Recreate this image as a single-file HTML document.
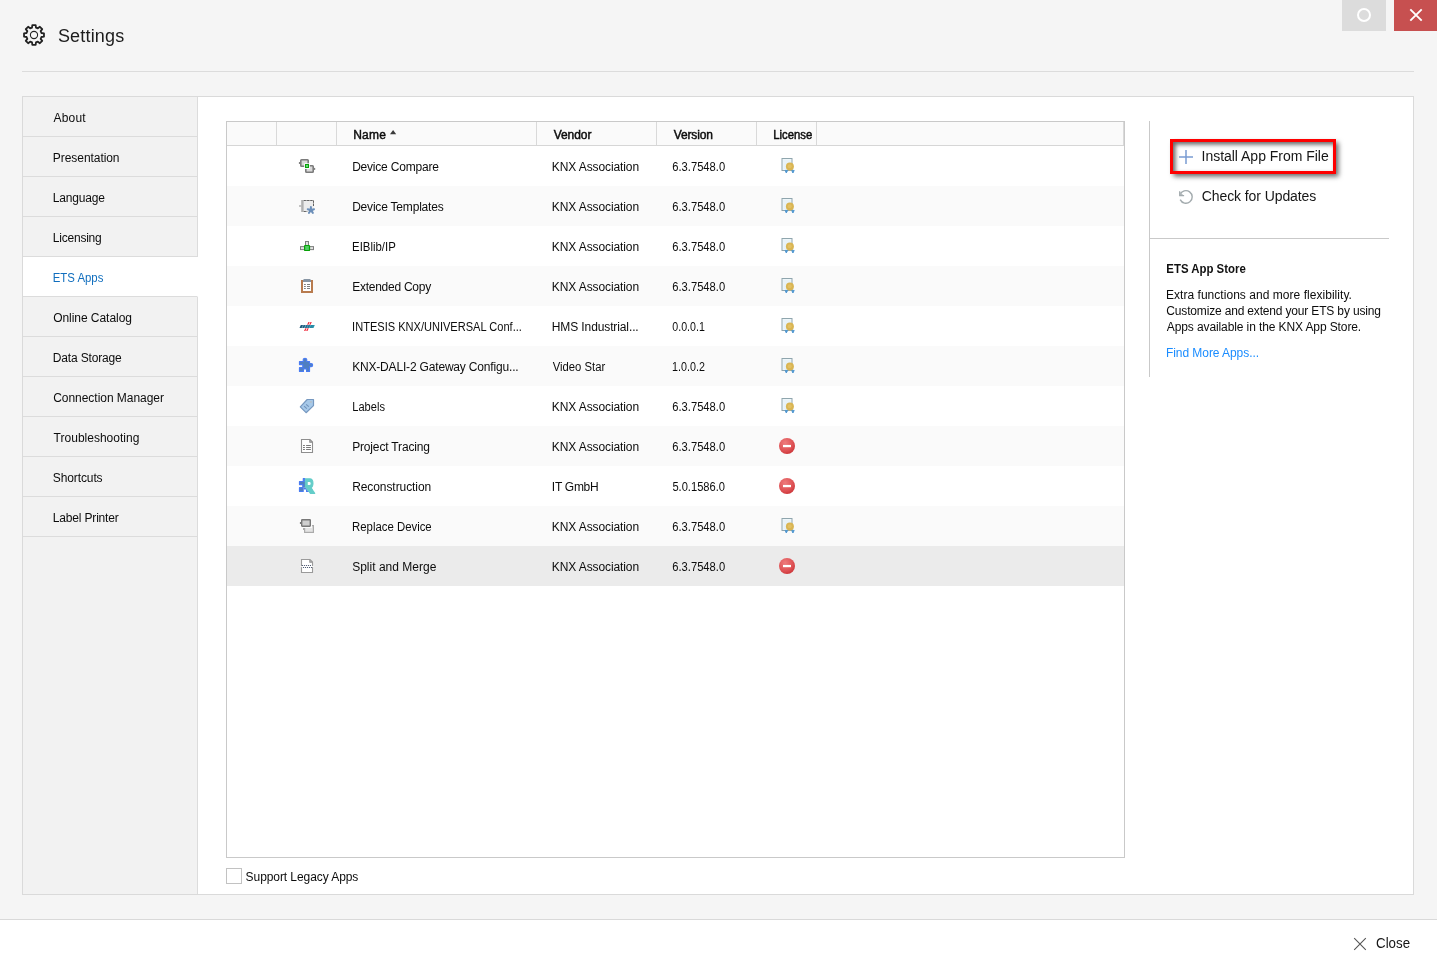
<!DOCTYPE html>
<html lang="en"><head><meta charset="utf-8"><title>Settings</title>
<style>
html,body{margin:0;padding:0}
body{width:1437px;height:966px;position:relative;overflow:hidden;background:#f5f5f5;font-family:"Liberation Sans", sans-serif}
div,span,svg,header,footer,nav,aside,main,label,h1,h2,p,a{position:absolute;box-sizing:border-box;margin:0;padding:0;display:block;font-weight:400}
.app{left:0;top:0;width:1437px;height:966px;will-change:transform}
.t{white-space:pre;font-size:12px;transform-origin:0 50%}
.i{overflow:visible}
.bar{left:0;top:0;width:1437px;height:72px;border-bottom:0}
.hl{left:22px;top:71px;width:1392px;height:1px;background:#dcdcdc}
.wb{top:0;height:31px}
.wb1{left:1342px;width:44px;background:#dcdcdc}
.wb2{left:1394px;width:43px;background:#c75050}
.panel{left:22px;top:96px;width:1392px;height:799px;background:#fff;border:1px solid #dadada}
.side{left:0;top:0;width:175px;height:797px;background:#f2f2f2;border-right:1px solid #dcdcdc}
.si{left:0;width:175px;height:40px;border-bottom:1px solid #dcdcdc;border-right:1px solid #dcdcdc;background:#f2f2f2}
.si.sel{background:#fff;border-right-color:#fff}
.tbl{width:899px;height:737px;border:1px solid #c9c9c9;background:#fff}
.thead{left:0;top:0;width:897px;height:24px;background:#fafafa;border-bottom:1px solid #d6d6d6}
.thc{top:0;height:23px;border-right:1px solid #d9d9d9}
.row{left:0;width:897px;height:40px}
.row.alt{background:#fafafa}
.row.cur{background:#ebebeb}
.chk{width:140px;height:16px}
.cb{left:0;top:0;width:16px;height:16px;border:1px solid #c2c2c2;background:#fff}
.act{width:241px;height:256px}
.vd{left:0;top:0;width:1px;height:256px;background:#c9c9c9}
.hd{left:0;top:117px;width:240px;height:1px;background:#c9c9c9}
.act p{left:0;top:0;width:240px;height:0}
.btn{width:166px;height:35px}
.btn.red{border:3px solid #fe0000;box-shadow:2.5px 2.5px 5px rgba(0,0,0,.6), inset 2.5px 2.5px 4px rgba(0,0,0,.6)}
.foot{left:0;top:919px;width:1437px;height:47px;background:#fff;border-top:1px solid #d9d9d9}
</style></head><body>
<div class="app">
<header class="bar"><svg class="i" style="left:20px;top:21px" width="28" height="28" viewBox="0 0 28 28"><path d="M12.01 6.56 L12.33 4.04 L15.67 4.04 L15.99 6.56 L17.85 7.33 L19.87 5.78 L22.22 8.13 L20.67 10.15 L21.44 12.01 L23.96 12.33 L23.96 15.67 L21.44 15.99 L20.67 17.85 L22.22 19.87 L19.87 22.22 L17.85 20.67 L15.99 21.44 L15.67 23.96 L12.33 23.96 L12.01 21.44 L10.15 20.67 L8.13 22.22 L5.78 19.87 L7.33 17.85 L6.56 15.99 L4.04 15.67 L4.04 12.33 L6.56 12.01 L7.33 10.15 L5.78 8.13 L8.13 5.78 L10.15 7.33Z" fill="none" stroke="#222" stroke-width="1.8" stroke-linejoin="round"/><circle cx="14" cy="14" r="3.6" fill="none" stroke="#222" stroke-width="1.1"/></svg><h1 class="t" style="left:57.88px;top:24.25px;font-size:18px;line-height:24px;letter-spacing:0.191px;color:#1c1c1c;">Settings</h1><div class="wb wb1"><svg class="i" style="left:12px;top:5px" width="20" height="20" viewBox="0 0 20 20"><circle cx="10" cy="10" r="6" fill="none" stroke="#fff" stroke-width="2"/></svg></div><div class="wb wb2"><svg class="i" style="left:12px;top:5px" width="20" height="20" viewBox="0 0 20 20"><path d="M4.3 4.3 L15.7 15.7 M15.7 4.3 L4.3 15.7" stroke="#fff" stroke-width="1.9" fill="none"/></svg></div></header>
<div class="hl"></div>
<main class="panel">
<nav class="side"><div class="si" style="top:0px"><span class="t" style="left:30.58px;top:12.93px;font-size:12px;line-height:16px;letter-spacing:0.178px;color:#0c0c0c;">About</span></div><div class="si" style="top:40px"><span class="t" style="left:29.87px;top:12.93px;font-size:12px;line-height:16px;letter-spacing:-0.064px;color:#0c0c0c;">Presentation</span></div><div class="si" style="top:80px"><span class="t" style="left:29.87px;top:12.93px;font-size:12px;line-height:16px;letter-spacing:-0.175px;color:#0c0c0c;">Language</span></div><div class="si" style="top:120px"><span class="t" style="left:29.87px;top:12.93px;font-size:12px;line-height:16px;letter-spacing:-0.227px;color:#0c0c0c;">Licensing</span></div><div class="si sel" style="top:160px"><span class="t" style="left:29.00px;top:12.93px;font-size:12px;line-height:16px;color:#106ebe;transform:translateX(0.77px) scaleX(0.9488);">ETS Apps</span></div><div class="si" style="top:200px"><span class="t" style="left:30.20px;top:12.93px;font-size:12px;line-height:16px;letter-spacing:-0.049px;color:#0c0c0c;">Online Catalog</span></div><div class="si" style="top:240px"><span class="t" style="left:29.87px;top:12.93px;font-size:12px;line-height:16px;letter-spacing:-0.171px;color:#0c0c0c;">Data Storage</span></div><div class="si" style="top:280px"><span class="t" style="left:30.18px;top:12.93px;font-size:12px;line-height:16px;letter-spacing:-0.034px;color:#0c0c0c;">Connection Manager</span></div><div class="si" style="top:320px"><span class="t" style="left:30.62px;top:12.93px;font-size:12px;line-height:16px;letter-spacing:0.010px;color:#0c0c0c;">Troubleshooting</span></div><div class="si" style="top:360px"><span class="t" style="left:29.81px;top:12.93px;font-size:12px;line-height:16px;letter-spacing:-0.110px;color:#0c0c0c;">Shortcuts</span></div><div class="si" style="top:400px"><span class="t" style="left:29.87px;top:12.93px;font-size:12px;line-height:16px;letter-spacing:-0.178px;color:#0c0c0c;">Label Printer</span></div></nav>
<div class="tbl" style="left:203px;top:24px"><div class="thead"><div class="thc" style="left:0px;width:50px"></div><div class="thc" style="left:50px;width:60px"></div><div class="thc" style="left:110px;width:200px"><span class="t" style="left:16.26px;top:4.93px;font-size:12px;line-height:16px;letter-spacing:0.194px;color:#0c0c0c;-webkit-text-stroke:0.45px #0c0c0c;">Name</span><svg class="i" style="left:53px;top:7px" width="7" height="6" viewBox="0 0 7 6"><path d="M0 5.3 L3.1 .9 L6.2 5.3Z" fill="#3a3a3a"/></svg></div><div class="thc" style="left:310px;width:120px"><span class="t" style="left:16.65px;top:4.93px;font-size:12px;line-height:16px;letter-spacing:-0.049px;color:#0c0c0c;-webkit-text-stroke:0.45px #0c0c0c;">Vendor</span></div><div class="thc" style="left:430px;width:100px"><span class="t" style="left:16.65px;top:4.93px;font-size:12px;line-height:16px;letter-spacing:-0.106px;color:#0c0c0c;-webkit-text-stroke:0.45px #0c0c0c;">Version</span></div><div class="thc" style="left:530px;width:60px"><span class="t" style="left:16.00px;top:4.93px;font-size:12px;line-height:16px;color:#0c0c0c;-webkit-text-stroke:0.45px #0c0c0c;transform:translateX(0.22px) scaleX(0.9442);">License</span></div><div class="thc" style="left:590px;width:307px"></div></div>
<div class="row" style="top:24px"><svg class="i" style="left:69px;top:8px" width="24" height="24" viewBox="0 0 24 24"><rect x="4.8" y="5.8" width="7.4" height="6.4" rx=".7" fill="#d9d9d9" stroke="#7b7b7b" stroke-width="1.6"/><rect x="2.9" y="8" width="1.6" height="2" fill="#808080"/><rect x="9.8" y="11.8" width="7.4" height="6.5" rx=".7" fill="#d9d9d9" stroke="#7b7b7b" stroke-width="1.6"/><rect x="17.7" y="13.9" width="1.5" height="2" fill="#808080"/><rect x="8.2" y="9.3" width="5.6" height="5.6" fill="#fff"/><rect x="9" y="10" width="4" height="4" fill="#0aa00a"/><rect x="10" y="11" width="2" height="2" fill="#63db77"/></svg><span class="t" style="left:125.15px;top:13.03px;font-size:12px;line-height:16px;letter-spacing:-0.205px;color:#0c0c0c;">Device Compare</span><span class="t" style="left:324.80px;top:13.03px;font-size:12px;line-height:16px;letter-spacing:-0.100px;color:#0c0c0c;">KNX Association</span><span class="t" style="left:445.00px;top:13.03px;font-size:12px;line-height:16px;color:#0c0c0c;transform:translateX(0.28px) scaleX(0.9312);">6.3.7548.0</span><svg class="i" style="left:553px;top:11px" width="16" height="18" viewBox="0 0 16 18"><rect x="2" y="1.5" width="10" height="12" fill="#f1f8fb" stroke="#8fa5ad" stroke-width="1"/><rect x="3.3" y="2.8" width="7.4" height="9.4" fill="#e2f0f7" opacity=".7"/><path d="M5.2 13.4 L7.6 13.4 L6.3 16Z M11.7 13.4 L14.2 13.4 L12.9 16Z" fill="#4f97d1" stroke="#4f97d1" stroke-width="1" stroke-linejoin="round"/><circle cx="9.9" cy="9.5" r="4" fill="#d9b553"/><circle cx="9.7" cy="9.3" r="2" fill="#e2c064"/></svg></div>
<div class="row alt" style="top:64px"><svg class="i" style="left:69px;top:8px" width="24" height="24" viewBox="0 0 24 24"><rect x="3" y="11" width="2.4" height="2" fill="#c4c4c4"/><rect x="5.2" y="6" width="2.6" height="12" fill="#b0b0b0"/><rect x="7.8" y="6.5" width="9.8" height="11" fill="#ececec"/><path d="M7.8 6.5 H17.5 V12" fill="none" stroke="#a4a4a4" stroke-width="1"/><path d="M7.8 6.5 H17.5 V12" fill="none" stroke="#505050" stroke-width="1" stroke-dasharray="2 1.3" opacity=".8"/><path d="M7.8 17.5 H11.5" fill="none" stroke="#a4a4a4" stroke-width="1"/><path d="M7.8 17.5 H11" fill="none" stroke="#505050" stroke-width="1" stroke-dasharray="2 1.2" opacity=".8"/><circle cx="14.9" cy="16.2" r="1.9" fill="#6c8fb9"/><g stroke="#6c8fb9" stroke-width="2" stroke-linecap="round"><line x1="14.9" y1="16.2" x2="14.90" y2="12.90"/><line x1="14.9" y1="16.2" x2="18.04" y2="15.18"/><line x1="14.9" y1="16.2" x2="16.84" y2="18.87"/><line x1="14.9" y1="16.2" x2="12.96" y2="18.87"/><line x1="14.9" y1="16.2" x2="11.76" y2="15.18"/></g></svg><span class="t" style="left:125.15px;top:13.03px;font-size:12px;line-height:16px;letter-spacing:-0.196px;color:#0c0c0c;">Device Templates</span><span class="t" style="left:324.80px;top:13.03px;font-size:12px;line-height:16px;letter-spacing:-0.100px;color:#0c0c0c;">KNX Association</span><span class="t" style="left:445.00px;top:13.03px;font-size:12px;line-height:16px;color:#0c0c0c;transform:translateX(0.28px) scaleX(0.9312);">6.3.7548.0</span><svg class="i" style="left:553px;top:11px" width="16" height="18" viewBox="0 0 16 18"><rect x="2" y="1.5" width="10" height="12" fill="#f1f8fb" stroke="#8fa5ad" stroke-width="1"/><rect x="3.3" y="2.8" width="7.4" height="9.4" fill="#e2f0f7" opacity=".7"/><path d="M5.2 13.4 L7.6 13.4 L6.3 16Z M11.7 13.4 L14.2 13.4 L12.9 16Z" fill="#4f97d1" stroke="#4f97d1" stroke-width="1" stroke-linejoin="round"/><circle cx="9.9" cy="9.5" r="4" fill="#d9b553"/><circle cx="9.7" cy="9.3" r="2" fill="#e2c064"/></svg></div>
<div class="row" style="top:104px"><svg class="i" style="left:69px;top:8px" width="24" height="24" viewBox="0 0 24 24"><rect x="4.5" y="12.6" width="4" height="3" fill="#e2e2e2" stroke="#7f7f7f"/><rect x="13.5" y="12.6" width="4" height="3" fill="#e2e2e2" stroke="#7f7f7f"/><rect x="9.5" y="7.5" width="3" height="4" fill="#e2e2e2" stroke="#7f7f7f"/><rect x="8.6" y="11.5" width="4.9" height="5" rx=".6" fill="#50cf63" stroke="#07a007" stroke-width="1.2"/></svg><span class="t" style="left:125.00px;top:13.03px;font-size:12px;line-height:16px;color:#0c0c0c;transform:translateX(0.06px) scaleX(0.9490);">EIBlib/IP</span><span class="t" style="left:324.80px;top:13.03px;font-size:12px;line-height:16px;letter-spacing:-0.100px;color:#0c0c0c;">KNX Association</span><span class="t" style="left:445.00px;top:13.03px;font-size:12px;line-height:16px;color:#0c0c0c;transform:translateX(0.28px) scaleX(0.9312);">6.3.7548.0</span><svg class="i" style="left:553px;top:11px" width="16" height="18" viewBox="0 0 16 18"><rect x="2" y="1.5" width="10" height="12" fill="#f1f8fb" stroke="#8fa5ad" stroke-width="1"/><rect x="3.3" y="2.8" width="7.4" height="9.4" fill="#e2f0f7" opacity=".7"/><path d="M5.2 13.4 L7.6 13.4 L6.3 16Z M11.7 13.4 L14.2 13.4 L12.9 16Z" fill="#4f97d1" stroke="#4f97d1" stroke-width="1" stroke-linejoin="round"/><circle cx="9.9" cy="9.5" r="4" fill="#d9b553"/><circle cx="9.7" cy="9.3" r="2" fill="#e2c064"/></svg></div>
<div class="row alt" style="top:144px"><svg class="i" style="left:69px;top:8px" width="24" height="24" viewBox="0 0 24 24"><rect x="6" y="7" width="10" height="11" fill="#fff" stroke="#b87b4e" stroke-width="2"/><path d="M8 5 H14 L15 6 V8 H7 V6Z" fill="#8795a4"/><g fill="#808080"><rect x="8" y="10" width="1.8" height="1"/><rect x="11" y="10" width="3" height="1"/><rect x="8" y="12" width="1.8" height="1"/><rect x="11" y="12" width="3" height="1"/><rect x="8" y="14" width="1.8" height="1"/><rect x="11" y="14" width="3" height="1"/></g></svg><span class="t" style="left:125.15px;top:13.03px;font-size:12px;line-height:16px;letter-spacing:-0.248px;color:#0c0c0c;">Extended Copy</span><span class="t" style="left:324.80px;top:13.03px;font-size:12px;line-height:16px;letter-spacing:-0.100px;color:#0c0c0c;">KNX Association</span><span class="t" style="left:445.00px;top:13.03px;font-size:12px;line-height:16px;color:#0c0c0c;transform:translateX(0.28px) scaleX(0.9312);">6.3.7548.0</span><svg class="i" style="left:553px;top:11px" width="16" height="18" viewBox="0 0 16 18"><rect x="2" y="1.5" width="10" height="12" fill="#f1f8fb" stroke="#8fa5ad" stroke-width="1"/><rect x="3.3" y="2.8" width="7.4" height="9.4" fill="#e2f0f7" opacity=".7"/><path d="M5.2 13.4 L7.6 13.4 L6.3 16Z M11.7 13.4 L14.2 13.4 L12.9 16Z" fill="#4f97d1" stroke="#4f97d1" stroke-width="1" stroke-linejoin="round"/><circle cx="9.9" cy="9.5" r="4" fill="#d9b553"/><circle cx="9.7" cy="9.3" r="2" fill="#e2c064"/></svg></div>
<div class="row" style="top:184px"><svg class="i" style="left:69px;top:8px" width="24" height="24" viewBox="0 0 24 24"><defs><linearGradient id="ig" x1="0" x2="1"><stop offset="0" stop-color="#1d5577"/><stop offset=".5" stop-color="#1f6f92"/><stop offset="1" stop-color="#2c97b0"/></linearGradient></defs><g transform="translate(.7 0) skewX(-25)"><rect x="9.3" y="11.1" width="14" height="2.8" fill="url(#ig)"/><rect x="11.4" y="11.1" width=".7" height="2.8" fill="#fff" opacity=".55"/><rect x="14" y="11.1" width=".7" height="2.8" fill="#fff" opacity=".55"/><rect x="16.4" y="11.1" width=".6" height="2.8" fill="#fff" opacity=".45"/><rect x="18.8" y="11.1" width=".6" height="2.8" fill="#fff" opacity=".4"/><rect x="15.4" y="8" width="1.3" height="2.7" fill="#f0283a"/><rect x="17.5" y="8" width="1.3" height="2.7" fill="#f0283a"/><rect x="15.3" y="14.3" width="1.3" height="2.7" fill="#f0283a"/><rect x="17.4" y="14.3" width="1.3" height="2.7" fill="#f0283a"/></g></svg><span class="t" style="left:125.00px;top:13.03px;font-size:12px;line-height:16px;color:#0c0c0c;transform:translateX(0.10px) scaleX(0.9211);">INTESIS KNX/UNIVERSAL Conf...</span><span class="t" style="left:324.80px;top:13.03px;font-size:12px;line-height:16px;letter-spacing:-0.112px;color:#0c0c0c;">HMS Industrial...</span><span class="t" style="left:445.00px;top:13.03px;font-size:12px;line-height:16px;color:#0c0c0c;transform:translateX(0.30px) scaleX(0.8854);">0.0.0.1</span><svg class="i" style="left:553px;top:11px" width="16" height="18" viewBox="0 0 16 18"><rect x="2" y="1.5" width="10" height="12" fill="#f1f8fb" stroke="#8fa5ad" stroke-width="1"/><rect x="3.3" y="2.8" width="7.4" height="9.4" fill="#e2f0f7" opacity=".7"/><path d="M5.2 13.4 L7.6 13.4 L6.3 16Z M11.7 13.4 L14.2 13.4 L12.9 16Z" fill="#4f97d1" stroke="#4f97d1" stroke-width="1" stroke-linejoin="round"/><circle cx="9.9" cy="9.5" r="4" fill="#d9b553"/><circle cx="9.7" cy="9.3" r="2" fill="#e2c064"/></svg></div>
<div class="row alt" style="top:224px"><svg class="i" style="left:69px;top:8px" width="24" height="24" viewBox="0 0 24 24"><path d="M3.5 7.5 H7.3 V5.5 Q7.3 4.4 9 4.4 Q10.7 4.4 10.7 5.5 V7.5 H13.5 V9.6 H15.2 Q16.6 9.6 16.6 11 Q16.6 12.6 15.2 12.6 H13.5 V17.5 H10.6 V14.9 H7.4 V17.5 H3.5 V13.7 H6.8 V10.6 H3.5Z" fill="#4f7fc0" stroke="#4a7cf2" stroke-width="1.2" stroke-linejoin="round"/></svg><span class="t" style="left:125.15px;top:13.03px;font-size:12px;line-height:16px;letter-spacing:-0.175px;color:#0c0c0c;">KNX-DALI-2 Gateway Configu...</span><span class="t" style="left:325.00px;top:13.03px;font-size:12px;line-height:16px;color:#0c0c0c;transform:translateX(0.63px) scaleX(0.9418);">Video Star</span><span class="t" style="left:445.00px;top:13.03px;font-size:12px;line-height:16px;color:#0c0c0c;transform:translateX(0.11px) scaleX(0.8934);">1.0.0.2</span><svg class="i" style="left:553px;top:11px" width="16" height="18" viewBox="0 0 16 18"><rect x="2" y="1.5" width="10" height="12" fill="#f1f8fb" stroke="#8fa5ad" stroke-width="1"/><rect x="3.3" y="2.8" width="7.4" height="9.4" fill="#e2f0f7" opacity=".7"/><path d="M5.2 13.4 L7.6 13.4 L6.3 16Z M11.7 13.4 L14.2 13.4 L12.9 16Z" fill="#4f97d1" stroke="#4f97d1" stroke-width="1" stroke-linejoin="round"/><circle cx="9.9" cy="9.5" r="4" fill="#d9b553"/><circle cx="9.7" cy="9.3" r="2" fill="#e2c064"/></svg></div>
<div class="row" style="top:264px"><svg class="i" style="left:69px;top:8px" width="24" height="24" viewBox="0 0 24 24"><path d="M11.2 5.5 H17.5 V11.6 L10.1 18.7 L4.3 12.9Z" fill="#a7c9e9" stroke="#7698c0" stroke-width="1.2" stroke-linejoin="round"/><circle cx="14.9" cy="8" r="1.1" fill="#b3c0cc"/><path d="M10.1 10.3 L12.8 12.6 M8.1 12.1 L10.8 14.6" stroke="#6f92bb" stroke-width="1.1" fill="none"/></svg><span class="t" style="left:125.00px;top:13.03px;font-size:12px;line-height:16px;color:#0c0c0c;transform:translateX(0.29px) scaleX(0.9240);">Labels</span><span class="t" style="left:324.80px;top:13.03px;font-size:12px;line-height:16px;letter-spacing:-0.100px;color:#0c0c0c;">KNX Association</span><span class="t" style="left:445.00px;top:13.03px;font-size:12px;line-height:16px;color:#0c0c0c;transform:translateX(0.28px) scaleX(0.9312);">6.3.7548.0</span><svg class="i" style="left:553px;top:11px" width="16" height="18" viewBox="0 0 16 18"><rect x="2" y="1.5" width="10" height="12" fill="#f1f8fb" stroke="#8fa5ad" stroke-width="1"/><rect x="3.3" y="2.8" width="7.4" height="9.4" fill="#e2f0f7" opacity=".7"/><path d="M5.2 13.4 L7.6 13.4 L6.3 16Z M11.7 13.4 L14.2 13.4 L12.9 16Z" fill="#4f97d1" stroke="#4f97d1" stroke-width="1" stroke-linejoin="round"/><circle cx="9.9" cy="9.5" r="4" fill="#d9b553"/><circle cx="9.7" cy="9.3" r="2" fill="#e2c064"/></svg></div>
<div class="row alt" style="top:304px"><svg class="i" style="left:69px;top:8px" width="24" height="24" viewBox="0 0 24 24"><path d="M5.5 5.5 H14 L16.5 8 V18.5 H5.5Z" fill="#fff" stroke="#8e8e8e" stroke-width="1.1"/><path d="M13.6 5.5 L16.5 8.4 H13.6Z" fill="#a8a8a8" stroke="#8e8e8e" stroke-width=".8"/><g fill="#7a7a7a"><rect x="7" y="11" width="1.9" height="1"/><rect x="10.1" y="11" width="4.8" height="1"/><rect x="7" y="13" width="1.9" height="1"/><rect x="10.1" y="13" width="4.8" height="1"/><rect x="7" y="15" width="1.9" height="1"/><rect x="10.1" y="15" width="4.8" height="1"/></g></svg><span class="t" style="left:125.15px;top:13.03px;font-size:12px;line-height:16px;letter-spacing:-0.155px;color:#0c0c0c;">Project Tracing</span><span class="t" style="left:324.80px;top:13.03px;font-size:12px;line-height:16px;letter-spacing:-0.100px;color:#0c0c0c;">KNX Association</span><span class="t" style="left:445.00px;top:13.03px;font-size:12px;line-height:16px;color:#0c0c0c;transform:translateX(0.28px) scaleX(0.9312);">6.3.7548.0</span><svg class="i" style="left:552px;top:12px" width="16" height="16" viewBox="0 0 16 16"><defs><radialGradient id="rg7" cx=".38" cy=".3" r=".75"><stop offset="0" stop-color="#ee7b7c"/><stop offset=".7" stop-color="#dd4f52"/><stop offset="1" stop-color="#cb3437"/></radialGradient></defs><circle cx="8" cy="8" r="8" fill="url(#rg7)"/><rect x="4" y="6.9" width="8" height="2.3" fill="#fff"/></svg></div>
<div class="row" style="top:344px"><svg class="i" style="left:69px;top:8px" width="24" height="24" viewBox="0 0 24 24"><defs><clipPath id="rc"><path d="M7.5 13.4 H9.3 L14.3 20.6 H7.5Z"/></clipPath></defs><path d="M3.5 7.5 H7.3 V4.6 H8.6 V7.5 H13.5 V17.5 H10.6 V14.9 H7.4 V17.5 H3.5 V13.7 H6.8 V10.6 H3.5Z" fill="#4f7fc0" stroke="#4a7cf2" stroke-width="1.2" stroke-linejoin="round"/><rect x="11" y="6.5" width="4" height="5" fill="#fff"/><text x="0" y="0" font-family="Liberation Sans, sans-serif" font-weight="700" font-size="20.6" fill="#64cdc9" stroke="#64cdc9" stroke-width="1.5" transform="translate(8.6 19.15) scale(.62 1)">R</text><g clip-path="url(#rc)"><rect x="7" y="13" width="8" height="8" fill="#fff"/><path d="M3.5 7.5 H7.3 V4.6 H8.6 V7.5 H13.5 V17.5 H10.6 V14.9 H7.4 V17.5 H3.5 V13.7 H6.8 V10.6 H3.5Z" fill="#4f7fc0" stroke="#4a7cf2" stroke-width="1.2" stroke-linejoin="round"/></g><path d="M9.1 12.9 H15 L19.2 19.1 V19.95 H14.2Z" fill="#64cdc9"/></svg><span class="t" style="left:125.15px;top:13.03px;font-size:12px;line-height:16px;letter-spacing:-0.076px;color:#0c0c0c;">Reconstruction</span><span class="t" style="left:324.83px;top:13.03px;font-size:12px;line-height:16px;letter-spacing:-0.266px;color:#0c0c0c;">IT GmbH</span><span class="t" style="left:445.00px;top:13.03px;font-size:12px;line-height:16px;color:#0c0c0c;transform:translateX(0.38px) scaleX(0.9281);">5.0.1586.0</span><svg class="i" style="left:552px;top:12px" width="16" height="16" viewBox="0 0 16 16"><defs><radialGradient id="rg8" cx=".38" cy=".3" r=".75"><stop offset="0" stop-color="#ee7b7c"/><stop offset=".7" stop-color="#dd4f52"/><stop offset="1" stop-color="#cb3437"/></radialGradient></defs><circle cx="8" cy="8" r="8" fill="url(#rg8)"/><rect x="4" y="6.9" width="8" height="2.3" fill="#fff"/></svg></div>
<div class="row alt" style="top:384px"><svg class="i" style="left:69px;top:8px" width="24" height="24" viewBox="0 0 24 24"><rect x="8.6" y="11.6" width="8.8" height="6.8" fill="#e4e4e4" stroke="#ababab" stroke-width="1.2"/><rect x="7" y="14" width="2" height="2" fill="#ababab"/><rect x="4" y="4" width="12" height="10" fill="#fbfbfb"/><rect x="5.7" y="5.7" width="8.6" height="6.6" rx=".45" fill="#cfcfcf" stroke="#787878" stroke-width="1.4"/><rect x="3.9" y="8" width="1.5" height="2" fill="#787878"/></svg><span class="t" style="left:125.00px;top:13.03px;font-size:12px;line-height:16px;color:#0c0c0c;transform:translateX(0.07px) scaleX(0.9470);">Replace Device</span><span class="t" style="left:324.80px;top:13.03px;font-size:12px;line-height:16px;letter-spacing:-0.100px;color:#0c0c0c;">KNX Association</span><span class="t" style="left:445.00px;top:13.03px;font-size:12px;line-height:16px;color:#0c0c0c;transform:translateX(0.28px) scaleX(0.9312);">6.3.7548.0</span><svg class="i" style="left:553px;top:11px" width="16" height="18" viewBox="0 0 16 18"><rect x="2" y="1.5" width="10" height="12" fill="#f1f8fb" stroke="#8fa5ad" stroke-width="1"/><rect x="3.3" y="2.8" width="7.4" height="9.4" fill="#e2f0f7" opacity=".7"/><path d="M5.2 13.4 L7.6 13.4 L6.3 16Z M11.7 13.4 L14.2 13.4 L12.9 16Z" fill="#4f97d1" stroke="#4f97d1" stroke-width="1" stroke-linejoin="round"/><circle cx="9.9" cy="9.5" r="4" fill="#d9b553"/><circle cx="9.7" cy="9.3" r="2" fill="#e2c064"/></svg></div>
<div class="row cur" style="top:424px"><svg class="i" style="left:69px;top:8px" width="24" height="24" viewBox="0 0 24 24"><path d="M5.5 5.5 H14 L16.5 8 V18.5 H5.5Z" fill="#fff" stroke="#9a9a9a" stroke-width="1.1"/><path d="M13.6 5.5 L16.5 8.4 H13.6Z" fill="#a8a8a8" stroke="#9a9a9a" stroke-width=".8"/><rect x="4.5" y="12.1" width="13" height="1" fill="#fff"/><g fill="#33415c"><circle cx="6.4" cy="11.5" r=".62"/><circle cx="8.4" cy="11.5" r=".62"/><circle cx="10.4" cy="11.5" r=".62"/><circle cx="12.4" cy="11.5" r=".62"/><circle cx="14.4" cy="11.5" r=".62"/><circle cx="7.5" cy="13.5" r=".62"/><circle cx="9.5" cy="13.5" r=".62"/><circle cx="11.5" cy="13.5" r=".62"/><circle cx="13.5" cy="13.5" r=".62"/><circle cx="15.5" cy="13.5" r=".62"/></g></svg><span class="t" style="left:125.16px;top:13.03px;font-size:12px;line-height:16px;letter-spacing:0.015px;color:#0c0c0c;">Split and Merge</span><span class="t" style="left:324.80px;top:13.03px;font-size:12px;line-height:16px;letter-spacing:-0.100px;color:#0c0c0c;">KNX Association</span><span class="t" style="left:445.00px;top:13.03px;font-size:12px;line-height:16px;color:#0c0c0c;transform:translateX(0.28px) scaleX(0.9312);">6.3.7548.0</span><svg class="i" style="left:552px;top:12px" width="16" height="16" viewBox="0 0 16 16"><defs><radialGradient id="rg10" cx=".38" cy=".3" r=".75"><stop offset="0" stop-color="#ee7b7c"/><stop offset=".7" stop-color="#dd4f52"/><stop offset="1" stop-color="#cb3437"/></radialGradient></defs><circle cx="8" cy="8" r="8" fill="url(#rg10)"/><rect x="4" y="6.9" width="8" height="2.3" fill="#fff"/></svg></div>
</div>
<label class="chk" style="left:203px;top:771px"><span class="cb"></span><span class="t" style="left:19.61px;top:0.93px;font-size:12px;line-height:16px;letter-spacing:-0.075px;color:#0c0c0c;">Support Legacy Apps</span></label>
<aside class="act" style="left:1126px;top:24px"><div class="vd"></div><div class="hd"></div><div class="btn red" style="left:21px;top:18px"><svg class="i" style="left:5px;top:7px" width="16" height="16" viewBox="0 0 16 16"><path d="M8 1 V15 M1 8 H15" stroke="#7a9cd2" stroke-width="1.5" fill="none"/></svg><span class="t" style="left:28.53px;top:4.37px;font-size:14px;line-height:20px;letter-spacing:-0.019px;color:#161616;">Install App From File</span></div><div class="btn" style="left:21px;top:58px"><svg class="i" style="left:6px;top:8px" width="20" height="20" viewBox="0 0 20 20"><path d="M4.05 7.6 A6.3 6.3 0 1 1 4.2 12.6" fill="none" stroke="#a3abae" stroke-width="1.4"/><path d="M3.4 4.2 V8.9 H8.1Z" fill="#b4bbbe"/><path d="M3.7 4.2 V8.6 H8.1" fill="none" stroke="#a3abae" stroke-width="1.2"/></svg><span class="t" style="left:31.80px;top:7.17px;font-size:14px;line-height:20px;letter-spacing:-0.092px;color:#161616;">Check for Updates</span></div><h2 class="t" style="left:17.00px;top:140.33px;font-size:12px;line-height:16px;color:#111;font-weight:700;transform:translateX(0.33px) scaleX(0.9508);">ETS App Store</h2><p><span class="t" style="left:16.97px;top:166.23px;font-size:12px;line-height:16px;letter-spacing:0.038px;color:#0c0c0c;">Extra functions and more flexibility.</span><span class="t" style="left:17.31px;top:182.23px;font-size:12px;line-height:16px;letter-spacing:-0.167px;color:#0c0c0c;">Customize and extend your ETS by using</span><span class="t" style="left:17.79px;top:198.23px;font-size:12px;line-height:16px;letter-spacing:-0.106px;color:#0c0c0c;">Apps available in the KNX App Store.</span></p><a class="t" style="left:16.97px;top:223.93px;font-size:12px;line-height:16px;letter-spacing:-0.063px;color:#1a8cff;">Find More Apps...</a></aside>
</main>
<footer class="foot"><svg class="i" style="left:1352px;top:16px" width="16" height="16" viewBox="0 0 16 16"><path d="M2.2 2.2 L13.8 13.8 M13.8 2.2 L2.2 13.8" stroke="#555" stroke-width="1.1" fill="none"/></svg><span class="t" style="left:1376.00px;top:13.37px;font-size:14px;line-height:20px;color:#161616;transform:translateX(0.03px) scaleX(0.9506);">Close</span></footer>
</div>
</body></html>
